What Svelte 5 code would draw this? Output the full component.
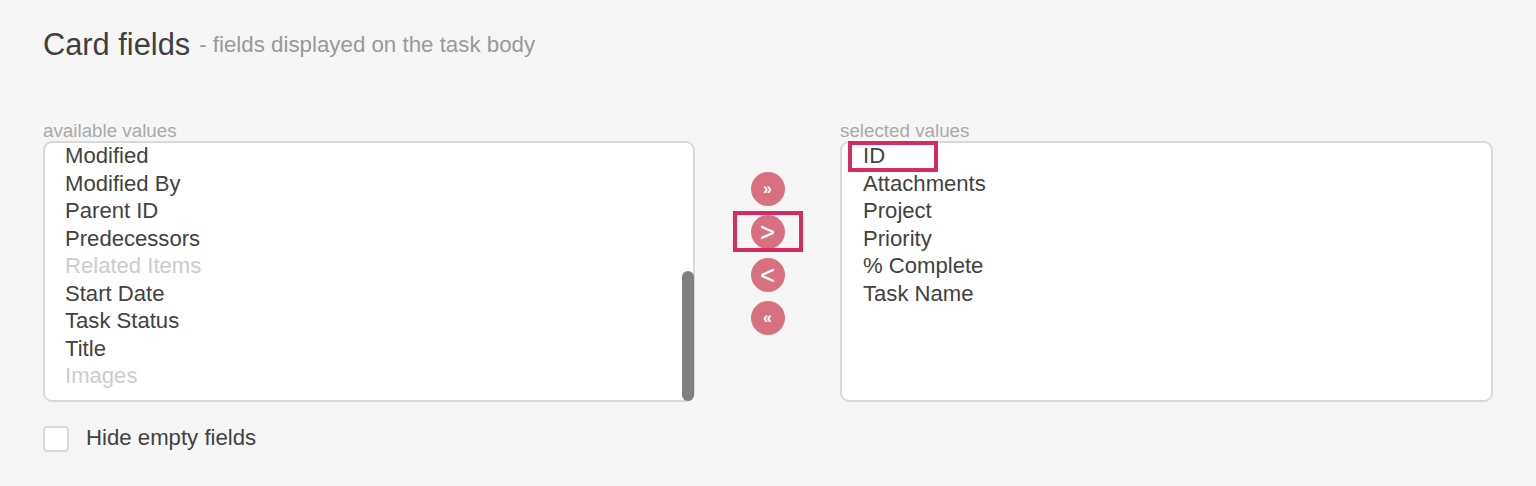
<script>
  const available = [
    { name: 'Modified' },
    { name: 'Modified By' },
    { name: 'Parent ID' },
    { name: 'Predecessors' },
    { name: 'Related Items', off: true },
    { name: 'Start Date' },
    { name: 'Task Status' },
    { name: 'Title' },
    { name: 'Images', off: true }
  ];
  const selected = ['ID', 'Attachments', 'Project', 'Priority', '% Complete', 'Task Name'];
</script>

<main class="page">
  <h1 class="heading">Card fields <small>- fields displayed on the task body</small></h1>

  <div class="picker">
    <section class="column">
      <div class="label">available values</div>
      <div class="box">
        <ul>
          {#each available as item}
            <li class:off={item.off}>{item.name}</li>
          {/each}
        </ul>
        <div class="thumb"></div>
      </div>
    </section>

    <div class="moves">
      <button class="small">»</button>
      <div class="marked">
        <button>&gt;</button>
        <span class="mark mark-move"></span>
      </div>
      <button>&lt;</button>
      <button class="small">«</button>
    </div>

    <section class="column">
      <div class="label">selected values</div>
      <div class="box">
        <ul class="right">
          {#each selected as item}
            <li>{item}</li>
          {/each}
        </ul>
        <span class="mark mark-id"></span>
      </div>
    </section>
  </div>

  <label class="check">
    <input type="checkbox" />
    <span>Hide empty fields</span>
  </label>
</main>

<style>
  :global(body) {
    margin: 0;
    background: #f6f6f6;
  }
  .page {
    box-sizing: border-box;
    height: 486px;
    padding: 27px 43px 0;
    font-family: "Liberation Sans", Arial, sans-serif;
    color: #424242;
    overflow: hidden;
  }
  .heading {
    display: flex;
    align-items: center;
    gap: 9px;
    margin: 0;
    font-size: 30.8px;
    line-height: 36px;
    font-weight: 400;
    color: #404040;
  }
  .heading small {
    font-size: 22.3px;
    color: #999;
  }
  .picker {
    display: grid;
    grid-template-columns: 652px 145px 653px;
    margin-top: 57px;
  }
  .label {
    font-size: 18.8px;
    line-height: 21px;
    color: #aaa;
    white-space: nowrap;
  }
  .box {
    position: relative;
    box-sizing: border-box;
    height: 261px;
    background: #fff;
    border: 2px solid #d9d9d9;
    border-radius: 9px;
  }
  ul {
    margin: -1px 0 0;
    padding: 0 0 0 20px;
    list-style: none;
  }
  ul.right {
    padding-left: 21px;
  }
  li {
    font-size: 22.1px;
    line-height: 27.5px;
  }
  li.off {
    color: #ccc;
  }
  .thumb {
    position: absolute;
    right: -1px;
    top: 128px;
    width: 12px;
    height: 130px;
    background: #808080;
    border-radius: 6px;
  }
  .moves {
    display: flex;
    flex-direction: column;
    align-items: center;
    gap: 9px;
    padding-top: 52px;
  }
  .marked {
    position: relative;
    display: flex;
  }
  button {
    display: block;
    width: 34px;
    height: 34px;
    padding: 0;
    border: 0;
    border-radius: 50%;
    background: #d9707f;
    color: #fff;
    font-family: inherit;
    font-size: 25px;
    line-height: 34px;
    text-align: center;
    -webkit-text-stroke: 0.3px #fff;
  }
  button.small {
    font-size: 16px;
    font-weight: 700;
    -webkit-text-stroke: 0;
  }
  .mark {
    position: absolute;
    box-sizing: border-box;
    border: 4px solid #d62a63;
    pointer-events: none;
  }
  .mark-move {
    left: -18px;
    top: -4px;
    width: 70px;
    height: 41px;
  }
  .mark-id {
    left: 6px;
    top: -2px;
    width: 90px;
    height: 31px;
  }
  .check {
    display: flex;
    align-items: center;
    gap: 17px;
    margin-top: 24px;
    font-size: 22.2px;
    line-height: 26px;
  }
  .check span {
    margin-top: -2px;
  }
  .check input {
    appearance: none;
    box-sizing: border-box;
    width: 26px;
    height: 26px;
    margin: 0;
    background: #fff;
    border: 2px solid #d9d9d9;
    border-radius: 4px;
  }
</style>
